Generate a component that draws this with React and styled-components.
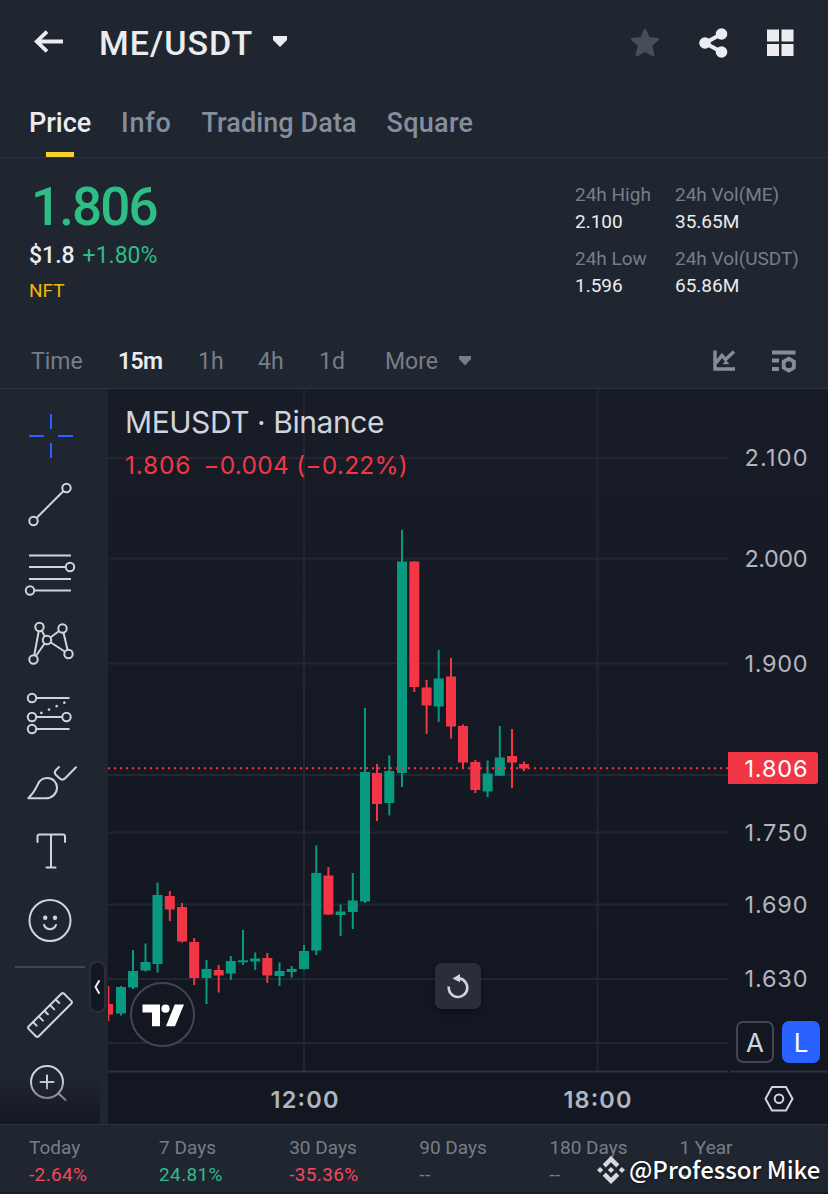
import React from 'react';
import styled, { createGlobalStyle } from 'styled-components';

const c = {
  panel: '#202630', line: '#2d333d', white: '#eaecef', grey: '#848e9c', dim: '#777d89',
  green: '#2ebd85', red: '#f6465d', yellow: '#f0b90b', chartGreen: '#089981', chartRed: '#f23645',
  tool: '#d1d4dc', blue: '#2962ff', axis: '#b2b5be',
};

const Global = createGlobalStyle`
  * { box-sizing: border-box; }
  body { margin: 0; background: ${c.panel}; font-family: Roboto, "Liberation Sans", sans-serif; }
`;

const Screen = styled.div`
  width: 828px; height: 1194px; display: flex; flex-direction: column;
  background: ${c.panel}; color: ${c.white}; overflow: hidden; position: relative;
`;
const Header = styled.header`
  height: 86px; flex: none; display: flex; align-items: center; padding: 0 34px 2px 34px;
`;
const Pair = styled.h1`
  margin: 1px 0 0 35px; width: 152px; font-size: 34px; line-height: 40px; font-weight: 500;
  letter-spacing: 1px; white-space: nowrap;
`;
const HeaderCaret = styled.svg`margin: 0 0 0 21px;`;
const Actions = styled.div`
  margin: 2px 0 0 auto; display: flex; align-items: center; gap: 39px;
`;
const Tabs = styled.nav`
  height: 72px; flex: none; display: flex; padding-left: 29px; border-bottom: 1px solid ${c.line};
`;
const Tab = styled.div`
  height: 71px; margin-right: 30px; width: ${p => p.$w}px; position: relative; white-space: nowrap;
  font-size: 27px; line-height: 75px; font-weight: 500; letter-spacing: ${p => p.$ls}px;
  color: ${p => (p.$active ? c.white : c.grey)};
  &::after {
    content: ''; display: ${p => (p.$active ? 'block' : 'none')};
    position: absolute; left: 17px; bottom: 0; width: 28px; height: 5px; background: #f8d12f;
  }
`;
const Summary = styled.section`
  height: 177px; flex: none; display: flex; justify-content: space-between; padding: 15px 29px 0 29px;
`;
const PriceBlock = styled.div`display: flex; flex-direction: column; white-space: nowrap;`;
const LastPrice = styled.div`
  font-size: 53px; line-height: 68px; font-weight: 500; color: ${c.green}; letter-spacing: -1.9px; padding-left: 2px;
`;
const Change = styled.div`
  font-size: 23px; line-height: 30px; font-weight: 500; display: flex; gap: 8px; color: ${p => p.$color || c.white};
`;
const Delta = styled.span`color: ${c.green}; font-weight: 400;`;
const Tag = styled.div`font-size: 19px; line-height: 40px; color: ${c.yellow};`;
const Stats = styled.div`
  display: grid; grid-template-columns: 100px 124px; grid-auto-rows: 63.5px; padding-top: 8px;
`;
const Stat = styled.div`font-size: 19px; line-height: 27px; white-space: nowrap;`;
const StatLabel = styled.div`color: ${c.dim};`;
const Intervals = styled.div`
  height: 54px; flex: none; display: flex; align-items: center; padding: 0 31px;
  border-bottom: 1px solid ${c.line};
`;
const Interval = styled.span`
  width: ${p => p.$w}px; white-space: nowrap; font-size: 23px; letter-spacing: ${p => p.$ls || 0}px;
  color: ${p => (p.$active ? c.white : c.dim)}; font-weight: ${p => (p.$active ? 600 : 400)};
`;
const IntervalCaret = styled.svg`margin-top: -2px;`;
const IntervalTools = styled.div`margin: -1px 0 0 auto; display: flex; align-items: center; gap: 36px;`;

const Body = styled.main`height: 735px; flex: none; display: flex;`;
const Toolbar = styled.aside`
  width: 108px; flex: none; display: flex; flex-direction: column; padding-top: 12px; position: relative;
`;
const ToolSlot = styled.div`
  height: 69px; flex: none; width: 100px; display: flex; align-items: center; justify-content: center;
  color: ${p => (p.$active ? c.blue : c.tool)};
`;
const Rule = styled.div`height: 2px; width: 70px; margin: 13px 0 12px 15px; flex: none; background: #434651;`;
const Fade = styled.div`
  position: absolute; left: 0; bottom: 0; width: 100px; height: 46px;
  background: linear-gradient(to bottom, rgba(19,23,34,0), rgba(19,23,34,0.95));
`;
const Collapse = styled.div`
  position: absolute; left: 89px; top: 572px; width: 17px; height: 52px; border-radius: 8px;
  border: 2px solid #2a2e39; background: #131722; display: flex; align-items: center; justify-content: center;
`;
const ChartArea = styled.section`
  width: 720px; position: relative; background: linear-gradient(to bottom, #181c27, #131722 82%);
`;
const ChartSvg = styled.svg`display: block; text { font-family: Inter, "Liberation Sans", sans-serif; }`;
const Legend = styled.div`
  position: absolute; left: 17px; top: 13px; font-family: Inter, "Liberation Sans", sans-serif; white-space: nowrap;
`;
const Symbol = styled.div`font-size: 30px; line-height: 40px; letter-spacing: -0.45px; color: ${c.tool};`;
const SymbolValues = styled.div`
  font-size: 24.5px; line-height: 30px; margin-top: 8px; color: ${c.chartRed}; display: flex; gap: 12px;
`;
const LegendValue = styled.span`letter-spacing: ${p => p.$ls}px;`;
const ResetButton = styled.div`
  position: absolute; left: 327px; top: 574px; width: 46px; height: 46px; border-radius: 7px;
  background: #2a2e39; box-shadow: 0 3px 5px rgba(0,0,0,0.35);
  display: flex; align-items: center; justify-content: center;
`;
const Badge = styled.div`
  position: absolute; left: 22px; top: 593px; width: 65px; height: 65px; border-radius: 50%;
  border: 2px solid #434651; background: #131722;
`;
const ScaleButtons = styled.div`position: absolute; left: 628px; top: 632px; display: flex; gap: 8px;`;
const ScaleButton = styled.div`
  width: 38px; height: 42px; border-radius: 7px; display: flex; align-items: center; justify-content: center;
  font: 400 26px Inter, sans-serif; color: ${p => (p.$on ? '#fff' : c.tool)};
  background: ${p => (p.$on ? c.blue : '#131722')}; border: 2px solid ${p => (p.$on ? c.blue : '#434651')};
`;
const Footer = styled.footer`
  height: 70px; flex: none; border-top: 1px solid #2f343e; border-bottom: 2px solid #181c25;
  display: grid; grid-template-columns: repeat(6, 130.1px); padding: 9px 0 0 29px;
`;
const Period = styled.div`font-size: 19px; line-height: 27px; white-space: nowrap; color: ${c.dim};`;
const PeriodValue = styled.div`color: ${p => p.$color || c.dim}; letter-spacing: 0.35px;`;
const Watermark = styled.div`
  position: absolute; left: 597px; top: 1152px; height: 36px; display: flex; align-items: center; gap: 4px;
  font: 500 24px "Noto Sans CJK SC", "Noto Sans", sans-serif; color: #fff; white-space: nowrap;
  text-shadow: 0 1px 3px rgba(0,0,0,0.7);
`;
const Handle = styled.span`line-height: 32px; margin-bottom: 3px;`;

const Icon = ({ w = 60, h = 60, children, sw = 2 }) => (
  <svg width={w} height={h} viewBox={`0 0 ${w} ${h}`} fill="none" stroke="currentColor" strokeWidth={sw}
    strokeLinecap="round" strokeLinejoin="round">{children}</svg>
);
const Nodes = ({ at }) => at.map(([x, y]) => <circle key={`${x}-${y}`} cx={x} cy={y} r="4.2" fill={c.panel} />);

const tools = [
  <path strokeLinecap="butt" d="M31 8V23M31 37V52M9 30H24M38 30H53" />,
  <><path d="M13.5 46L46.5 13" /><Nodes at={[[46.5, 13], [13.5, 46]]} /></>,
  <><path strokeLinecap="butt" d="M9 11.5H51M9 23H50M9 35H51M10 46.5H51" /><Nodes at={[[50, 23], [10, 46.5]]} /></>,
  <><path d="M13.5 46.5L19.5 14L27 27L42.5 15.5L48.5 41L27 27Z" /><Nodes at={[[19.5, 14], [42.5, 15.5], [27, 27], [13.5, 46.5], [48.5, 41]]} /></>,
  <><path strokeLinecap="butt" d="M12 16H49.5M12 35H46M12 47H49.5" /><path strokeWidth="2.6" strokeDasharray="0.1 8.3" d="M21.3 31L46.5 19.7" /><Nodes at={[[12, 16], [12, 35], [46.5, 35], [12, 47]]} /></>,
  <><path d="M8.3 47.3C14 42 15.5 38 18 33C20 28.5 24 27 27.5 27C33 27 37 31.5 37 36.7C37 42.5 32 47.3 25.5 47.3Z" /><path d="M39 16L36.2 18.7Q33.5 21.3 36 24L39.5 27.3Q42.4 30 45.2 27.2L56 16.3" /></>,
  <path d="M17.5 22V16.5Q17.5 14.5 19.5 14.5H43Q45 14.5 45 16.5V22M31 14.5V47.5M26.5 47.5H35.5" />,
  <><circle cx="30" cy="31.5" r="20.5" /><circle cx="25.2" cy="28.7" r="2.2" fill="currentColor" stroke="none" /><circle cx="35" cy="28.7" r="2.2" fill="currentColor" stroke="none" /><path d="M24 36C26.5 41.5 33.5 41.5 36 36" /></>,
];

// [x, direction, high, body top, body bottom, low]
const candles = [
  [121, 1, 986, 987, 1013.5, 1015.5], [133, 1, 950, 971, 987.5, 989], [145.5, 1, 943.5, 962, 970.5, 971.5],
  [157.5, 1, 882.5, 895, 964, 972.5], [169.8, 0, 891, 896, 909.5, 921], [182, 0, 903, 907, 941.5, 942.5],
  [194.2, 0, 938, 942, 978, 985], [206.5, 1, 960, 969, 978, 1004], [218.7, 0, 965, 970, 975.5, 992.5],
  [230.8, 1, 956, 961, 973.5, 980], [243, 1, 930, 960.3, 962.3, 965], [255.2, 1, 952.5, 958.5, 961.5, 970],
  [267.3, 0, 953, 958, 975.5, 983], [279.5, 1, 962.5, 971, 976, 986], [291.7, 1, 966, 969, 972, 977.5],
  [304, 1, 945, 951, 969, 969.5], [316.3, 1, 845.5, 873, 950.5, 955], [328.4, 0, 867, 875.5, 914.5, 915],
  [340.6, 1, 904.5, 911.5, 915, 936], [352.8, 1, 873, 900.5, 912, 929], [365, 1, 708, 772, 901.5, 903],
  [377, 0, 764, 773, 804, 821], [389.3, 1, 755.5, 771, 803, 815.5], [402, 1, 530, 561.5, 773, 787],
  [414.3, 0, 561, 561.5, 687, 692], [426.6, 0, 680, 687.5, 705.5, 734], [438.7, 1, 650, 678.5, 706.5, 722],
  [451, 0, 658, 676.5, 726.5, 738.5], [463, 0, 724.5, 726, 762.5, 769], [475.3, 0, 760, 762, 790, 793],
  [487.6, 1, 760.5, 773.5, 791.5, 797], [499.8, 1, 726, 757.5, 775.7, 776], [512, 0, 729, 756, 762.5, 788],
  [524, 0, 761.5, 764, 768.5, 771],
];
const levels = [['2.100', 458], ['2.000', 558.5], ['1.900', 663.5], ['', 775], ['1.750', 832.5], ['1.690', 904.5], ['1.630', 979], ['', 1043]];

const Chart = () => (
  <ChartSvg width="720" height="735" viewBox="108 389 720 735">
    <g stroke="#22262f" strokeWidth="2">
      {levels.map(([t, y]) => <path key={y} d={`M108 ${y}H728`} />)}
      <path d="M304 389V1071M597.5 389V1071" />
    </g>
    <path d="M108 1071.5H728M730 1071.5H828" stroke="#2e323d" strokeWidth="2" />
    <rect x="108" y="1004" width="5" height="10.5" fill={c.chartRed} />
    <path d="M108.6 986V1021" stroke={c.chartRed} strokeWidth="1.5" />
    {candles.map(([x, up, h, t, b, l]) => (
      <g key={x} fill={up ? c.chartGreen : c.chartRed}>
        <rect x={x - 1} y={h} width="2" height={l - h} />
        <rect x={x - 5} y={t} width="10" height={b - t} />
      </g>
    ))}
    <path d="M108 768.3H728" stroke={c.chartRed} strokeWidth="2" strokeDasharray="2 4" />
    <g fill={c.axis} fontSize="23.5">
      {levels.filter(([t]) => t).map(([t, y]) => (
        <text key={t} x="744.5" y={y + 8.3} textLength="63" lengthAdjust="spacing">{t}</text>
      ))}
    </g>
    <path d="M728 752H815Q818 752 818 755V781Q818 784 815 784H728Z" fill={c.chartRed} />
    <text x="744.5" y="776.5" fill="#fff" fontSize="23.5" textLength="63">1.806</text>
    <g fill={c.axis} fontSize="23.5" fontWeight="600">
      <text x="270.5" y="1107.7" textLength="68">12:00</text>
      <text x="563.5" y="1107.7" textLength="68">18:00</text>
    </g>
    <g fill="none" stroke={c.tool} strokeWidth="2">
      <path d="M772 1087H786L792.5 1098.7L786 1110.5H772L765.5 1098.7Z" />
      <circle cx="779" cy="1098.7" r="4.3" />
    </g>
  </ChartSvg>
);

const periods = [
  ['Today', '-2.64%', c.red], ['7 Days', '24.81%', c.green], ['30 Days', '-35.36%', c.red],
  ['90 Days', '--'], ['180 Days', '--'], ['1 Year', '--'],
];

export default function App() {
  return (
    <Screen>
      <Global />
      <Header>
        <svg width="30" height="24" viewBox="0 0 30 24" fill="none" stroke={c.white} strokeWidth="3.8"><path d="M13 1.7L2.8 11.5L13 21.3M2.8 11.5H29" /></svg>
        <Pair>ME/USDT</Pair>
        <HeaderCaret width="16" height="12" viewBox="0 0 16 12" fill={c.white}><path d="M1 0H15V4L8 11L1 4Z" /></HeaderCaret>
        <Actions>
          <svg width="30" height="30" viewBox="0 0 30 30" fill="#474d59" stroke="#474d59" strokeWidth="3" strokeLinejoin="round"><path d="M15 2.5L18.4 10.5L27.4 11.3L20.6 17L23 27L15 22.3L7 27L9.4 17L2.6 11.3L11.6 10.5Z" /></svg>
          <svg width="29" height="30" viewBox="0 0 29 30" fill={c.white}><path d="M6 15L22.5 6M6 15L22.5 24" stroke={c.white} strokeWidth="4" /><circle cx="6" cy="15" r="5.8" /><circle cx="22.5" cy="6" r="5.8" /><circle cx="22.5" cy="24" r="5.8" /></svg>
          <svg width="27" height="28" viewBox="0 0 27 28" fill={c.white}><path d="M0 0.5H12V12.5H0ZM14.5 0.5H26.5V12.5H14.5ZM0 15H12V27H0ZM14.5 15H26.5V27H14.5Z" /></svg>
        </Actions>
      </Header>
      <Tabs>
        <Tab $active $w={62} $ls={0}>Price</Tab>
        <Tab $w={50.5} $ls={0.8}>Info</Tab>
        <Tab $w={155} $ls={0.1}>Trading Data</Tab>
        <Tab $w={88} $ls={0.3}>Square</Tab>
      </Tabs>
      <Summary>
        <PriceBlock>
          <LastPrice>1.806</LastPrice>
          <Change>$1.8<Delta>+1.80%</Delta></Change>
          <Tag>NFT</Tag>
        </PriceBlock>
        <Stats>
          <Stat><StatLabel>24h High</StatLabel>2.100</Stat>
          <Stat><StatLabel>24h Vol(ME)</StatLabel>35.65M</Stat>
          <Stat><StatLabel>24h Low</StatLabel>1.596</Stat>
          <Stat><StatLabel>24h Vol(USDT)</StatLabel>65.86M</Stat>
        </Stats>
      </Summary>
      <Intervals>
        <Interval $w={87}>Time</Interval>
        <Interval $w={80} $active $ls={-0.7}>15m</Interval>
        <Interval $w={60}>1h</Interval>
        <Interval $w={61}>4h</Interval>
        <Interval $w={66}>1d</Interval>
        <Interval $w={73}>More</Interval>
        <IntervalCaret width="14" height="10" viewBox="0 0 14 10" fill={c.dim}><path d="M1 0H13V3L7 9.5L1 3Z" /></IntervalCaret>
        <IntervalTools>
          <svg width="23" height="22" viewBox="0 0 23 22" fill="none" stroke={c.grey} strokeWidth="3.4"><path d="M2 0.5V19H22M3 13L9 5.5L12.5 9.5L21 1.5" /><path d="M13 10.5L16 14H10Z" strokeWidth="0.5" fill={c.grey} /></svg>
          <svg width="25" height="23" viewBox="0 0 25 23" fill={c.grey}><path d="M0 0.5H23.5V4.5H0ZM0 8.5H7V12.5H0ZM0 17H7V21H0Z" /><path fillRule="evenodd" d="M16.8 6.5L23.8 10.5V18.8L16.8 22.8L9.8 18.8V10.5ZM16.8 11.3A3.4 3.4 0 1 0 16.8 18.1A3.4 3.4 0 1 0 16.8 11.3Z" /></svg>
        </IntervalTools>
      </Intervals>
      <Body>
        <Toolbar>
          {tools.map((t, i) => <ToolSlot key={i} $active={i === 0}><Icon>{t}</Icon></ToolSlot>)}
          <Rule />
          <ToolSlot>
            <Icon>
              <g transform="translate(30 30) rotate(-45)">
                <rect x="-25" y="-7" width="50" height="14" rx="2" />
                <path d="M-17 -7V-2M-9 -7V-1M-1 -7V-2M7 -7V-1M15 -7V-2" />
              </g>
            </Icon>
          </ToolSlot>
          <ToolSlot>
            <Icon><circle cx="27" cy="28" r="16" /><path d="M27 21.5V34.5M20.5 28H33.5M38.5 39.5L45.5 46" /></Icon>
          </ToolSlot>
          <Fade />
          <Collapse><Icon w={10} h={16}><path d="M6 2L2.5 8L6 14" /></Icon></Collapse>
        </Toolbar>
        <ChartArea>
          <Chart />
          <Legend>
            <Symbol>MEUSDT · Binance</Symbol>
            <SymbolValues><LegendValue $ls={0.8}>1.806</LegendValue><LegendValue $ls={0.25}>−0.004 (−0.22%)</LegendValue></SymbolValues>
          </Legend>
          <Badge>
            <svg width="61" height="61" viewBox="132 984.5 61 61" fill="#fff"><path d="M142.5 1005H160V1026.7H152V1013H142.5ZM174.7 1005H184L175 1026.7H166Z" /><circle cx="165.5" cy="1009.2" r="4.1" /></svg>
          </Badge>
          <ResetButton>
            <svg width="24" height="26" viewBox="0 0 24 26" fill="none" stroke={c.tool} strokeWidth="2.6"><path d="M2.8 13.5A9.3 9.3 0 1 0 12.5 5.4" /><path d="M14 1V9.2L6.5 5.4Z" fill={c.tool} stroke="none" /></svg>
          </ResetButton>
          <ScaleButtons><ScaleButton>A</ScaleButton><ScaleButton $on>L</ScaleButton></ScaleButtons>
        </ChartArea>
      </Body>
      <Footer>
        {periods.map(([label, value, color]) => (
          <Period key={label}>{label}<PeriodValue $color={color}>{value}</PeriodValue></Period>
        ))}
      </Footer>
      <Watermark>
        <svg width="28" height="28" viewBox="0 0 28 28" fill="#d8d8d8"><path d="M14 0L22.3 8.3L19.2 11.4L14 6.2L8.8 11.4L5.7 8.3ZM14 28L22.3 19.7L19.2 16.6L14 21.8L8.8 16.6L5.7 19.7ZM3.1 10.9L6.2 14L3.1 17.1L0 14ZM24.9 10.9L28 14L24.9 17.1L21.8 14ZM14 10.9L17.1 14L14 17.1L10.9 14Z" /></svg>
        <Handle>@Professor Mike</Handle>
      </Watermark>
    </Screen>
  );
}
